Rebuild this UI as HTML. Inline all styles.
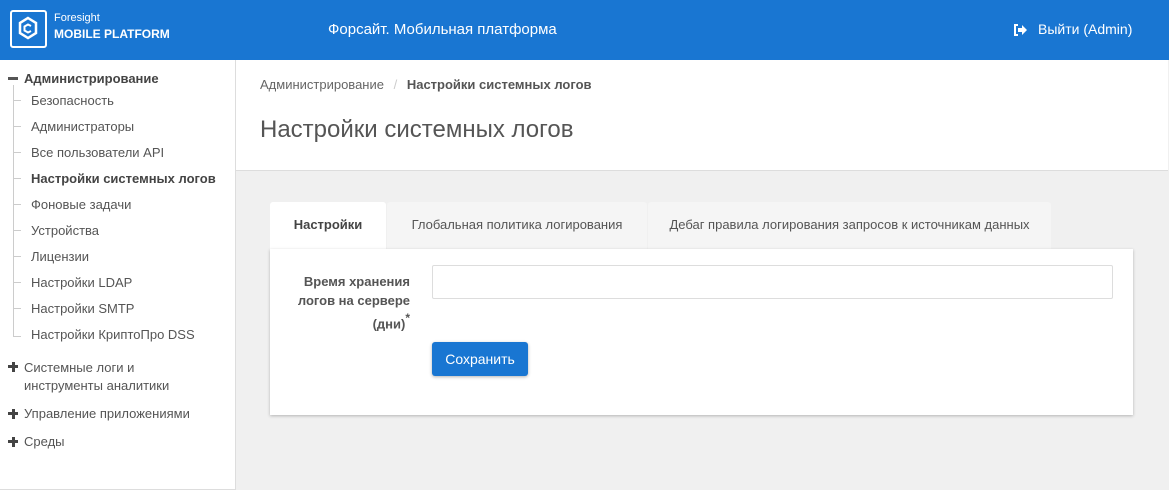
<!DOCTYPE html>
<html><head><meta charset="utf-8"><style>
*{box-sizing:border-box;margin:0;padding:0}
body{width:1169px;height:490px;overflow:hidden;font-family:"Liberation Sans",Arial,sans-serif;background:#f0f0f0;position:relative;color:#555}
.hdr{position:absolute;left:0;top:0;width:1169px;height:60px;background:#1976d2;color:#fff}
.logo{position:absolute;left:10px;top:10px;width:37px;height:38px;border:2px solid #fff;border-radius:3px}
.side{position:absolute;left:0;top:60px;width:236px;height:430px;background:#fff;border-right:1px solid #ddd;border-bottom:1px solid #ddd}
.side div{position:absolute;font-size:13px;color:#555;white-space:nowrap}
.main{position:absolute;left:236px;top:60px;width:932px;height:111px;background:#fff;border-bottom:1px solid #ddd}
.card{position:absolute;left:270px;top:249px;width:863px;height:166px;background:#fff;box-shadow:0 1px 3px rgba(0,0,0,.25)}
.tab{position:absolute;top:202px;height:47px;background:#f5f5f5;font-size:13px;color:#555;line-height:46px;text-align:center;border-radius:3px 3px 0 0}
.side .h{width:10px;height:3px;background:#444}
.side .v{width:3px;height:10px;background:#444}
</style></head><body>
<div class="hdr">
 <div class="logo"><svg width="33" height="34" viewBox="0 0 33 34"><path d="M16 6 L24 11 L24 21 L16 26 L8 21 L8 11 Z" fill="none" stroke="#fff" stroke-width="2.5"/><path d="M19 14 L16 12.5 L12.5 14.5 L12.5 18.5 L16 20.5 L19 19" fill="none" stroke="#fff" stroke-width="2"/></svg></div>
 <div style="position:absolute;left:54px;top:12px;font-size:11px">Foresight</div>
 <div style="position:absolute;left:54px;top:27px;font-size:12px;font-weight:bold">MOBILE PLATFORM</div>
 <div style="position:absolute;left:328px;top:21px;font-size:15px">Форсайт. Мобильная платформа</div>
 <svg style="position:absolute;left:1013px;top:24px" width="14" height="12" viewBox="0 0 14 12"><path d="M5 1H2V11H5" fill="none" stroke="#fff" stroke-width="2"/><path d="M5 4H9V1L14 6L9 11V8H5Z" fill="#fff"/></svg>
 <div style="position:absolute;left:1038px;top:21px;font-size:14px">Выйти (Admin)</div>
</div>
<div class="side">
 <div class="h" style="left:8px;top:17px;background:#555"></div>
 <div style="left:24px;top:11px;font-weight:bold;color:#444">Администрирование</div>
 <div style="left:13px;top:25px;width:1px;height:252px;background:#ccc"></div>
 <div style="left:13px;top:40px;width:8px;height:1px;background:#ccc"></div><div style="left:31px;top:33px">Безопасность</div>
 <div style="left:13px;top:66px;width:8px;height:1px;background:#ccc"></div><div style="left:31px;top:59px">Администраторы</div>
 <div style="left:13px;top:92px;width:8px;height:1px;background:#ccc"></div><div style="left:31px;top:85px">Все пользователи API</div>
 <div style="left:13px;top:118px;width:8px;height:1px;background:#ccc"></div><div style="left:31px;top:111px;font-weight:bold;color:#444">Настройки системных логов</div>
 <div style="left:13px;top:144px;width:8px;height:1px;background:#ccc"></div><div style="left:31px;top:137px">Фоновые задачи</div>
 <div style="left:13px;top:170px;width:8px;height:1px;background:#ccc"></div><div style="left:31px;top:163px">Устройства</div>
 <div style="left:13px;top:196px;width:8px;height:1px;background:#ccc"></div><div style="left:31px;top:189px">Лицензии</div>
 <div style="left:13px;top:222px;width:8px;height:1px;background:#ccc"></div><div style="left:31px;top:215px">Настройки LDAP</div>
 <div style="left:13px;top:248px;width:8px;height:1px;background:#ccc"></div><div style="left:31px;top:241px">Настройки SMTP</div>
 <div style="left:13px;top:276px;width:8px;height:1px;background:#ccc"></div><div style="left:31px;top:267px">Настройки КриптоПро DSS</div>
 <div class="h" style="left:8px;top:305px"></div><div class="v" style="left:11.5px;top:301.5px"></div>
 <div style="left:24px;top:299px;line-height:18px">Системные логи и<br>инструменты аналитики</div>
 <div class="h" style="left:8px;top:352px"></div><div class="v" style="left:11.5px;top:348.5px"></div>
 <div style="left:24px;top:346px">Управление приложениями</div>
 <div class="h" style="left:8px;top:380px"></div><div class="v" style="left:11.5px;top:376.5px"></div>
 <div style="left:24px;top:374px">Среды</div>
</div>
<div class="main">
 <div style="position:absolute;left:24px;top:17px;font-size:13px;color:#666">Администрирование <span style="color:#ccc;margin:0 6px">/</span> <b style="color:#555">Настройки системных логов</b></div>
 <div style="position:absolute;left:24px;top:56px;font-size:24px;color:#555">Настройки системных логов</div>
</div>
<div class="tab" style="left:270px;width:116px;background:#fff;font-weight:bold;color:#444">Настройки</div>
<div class="tab" style="left:387px;width:260px">Глобальная политика логирования</div>
<div class="tab" style="left:648px;width:403px">Дебаг правила логирования запросов к источникам данных</div>
<div class="card">
 <div style="position:absolute;left:0;width:140px;top:23px;text-align:right;font-size:13px;font-weight:bold;color:#555;line-height:19px">Время хранения<br>логов на сервере<br>(дни)<sup style="font-size:12px;position:relative;top:-1px">*</sup></div>
 <div style="position:absolute;left:162px;top:16px;width:681px;height:34px;border:1px solid #ddd;border-radius:2px"></div>
 <div style="position:absolute;left:162px;top:93px;width:96px;height:34px;background:#1976d2;border-radius:3px;color:#fff;font-size:14px;line-height:34px;text-align:center;box-shadow:0 1px 3px rgba(0,0,0,.3)">Сохранить</div>
</div>
</body></html>
